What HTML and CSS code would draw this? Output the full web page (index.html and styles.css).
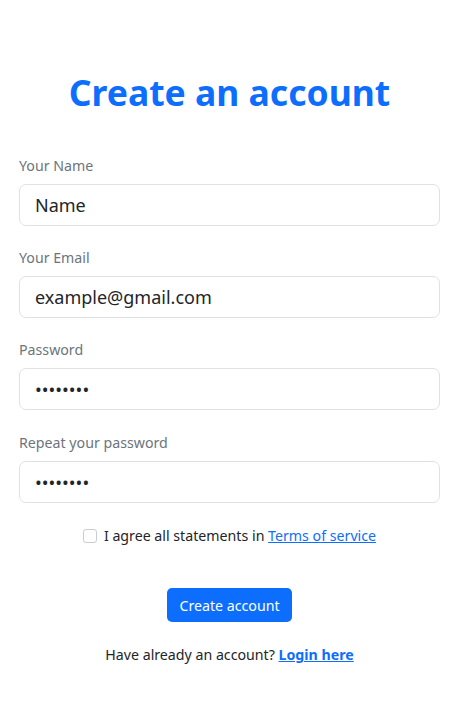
FILE: index.html
```html
<!DOCTYPE html>
<html lang="en">
<head>
<meta charset="utf-8">
<title>Create an account</title>
<link rel="stylesheet" href="styles.css">
</head>
<body>
<main class="page">
  <h1 class="title">Create an account</h1>
  <form class="form">
    <div class="field">
      <label class="label" for="name">Your Name</label>
      <input class="input" id="name" type="text" value="Name">
    </div>
    <div class="field">
      <label class="label" for="email">Your Email</label>
      <input class="input" id="email" type="email" value="example@gmail.com">
    </div>
    <div class="field">
      <label class="label" for="pw">Password</label>
      <input class="input" id="pw" type="password" value="password">
    </div>
    <div class="field">
      <label class="label" for="pw2">Repeat your password</label>
      <input class="input" id="pw2" type="password" value="password">
    </div>
    <div class="agree">
      <input class="check" id="agree" type="checkbox">
      <label class="agree-text" for="agree">I agree all statements in <a href="#" class="link">Terms of service</a></label>
    </div>
    <div class="actions">
      <button class="btn" type="button">Create account</button>
    </div>
    <p class="login">Have already an account? <a href="#" class="link strong">Login here</a></p>
  </form>
</main>
</body>
</html>
```
FILE: styles.css
```css
* { box-sizing: border-box; }
html, body { margin: 0; padding: 0; background: #fff; }
body {
  font-family: "Noto Sans", "Open Sans", sans-serif;
  color: #212529;
}
.page {
  width: 421px;
  margin-left: 19px;
  padding-top: 68px;
}
.title {
  margin: 0 0 40px;
  text-align: center;
  font-size: 35.5px;
  line-height: 48px;
  font-weight: 700;
  color: #0d6efd;
}
.form { display: flex; flex-direction: column; }
.field { display: flex; flex-direction: column; margin-bottom: 22px; }
.field:nth-child(4) { margin-top: 1px; }
.label {
  font-size: 14.2px;
  line-height: 20px;
  color: #6c757d;
  margin-bottom: 8px;
}
.input {
  height: 42px;
  width: 100%;
  border: 1px solid #dee2e6;
  border-radius: 7px;
  padding: 0 15px;
  font-family: inherit;
  font-size: 18px;
  color: #212529;
  background: #fff;
  outline: none;
}
.agree {
  display: flex;
  justify-content: center;
  align-items: center;
  gap: 7px;
  margin-top: 0;
  font-size: 14.2px;
  line-height: 22px;
  color: #212529;
}
.check {
  margin: 0;
  width: 14px;
  height: 14px;
  appearance: none;
  border: 1px solid #c8cdd2;
  border-radius: 3px;
  background: #fff;
}
.link { color: #0d6efd; text-decoration: underline; }
.strong { font-weight: 700; }
.actions { display: flex; justify-content: center; margin-top: 41px; }
.btn {
  height: 34px;
  padding: 0 12px;
  border: none;
  border-radius: 5px;
  background: #0d6efd;
  color: #fff;
  font-family: inherit;
  font-size: 14.2px;
}
.login {
  margin: 22px 0 0;
  text-align: center;
  font-size: 14.2px;
  line-height: 22px;
  color: #212529;
}
```
